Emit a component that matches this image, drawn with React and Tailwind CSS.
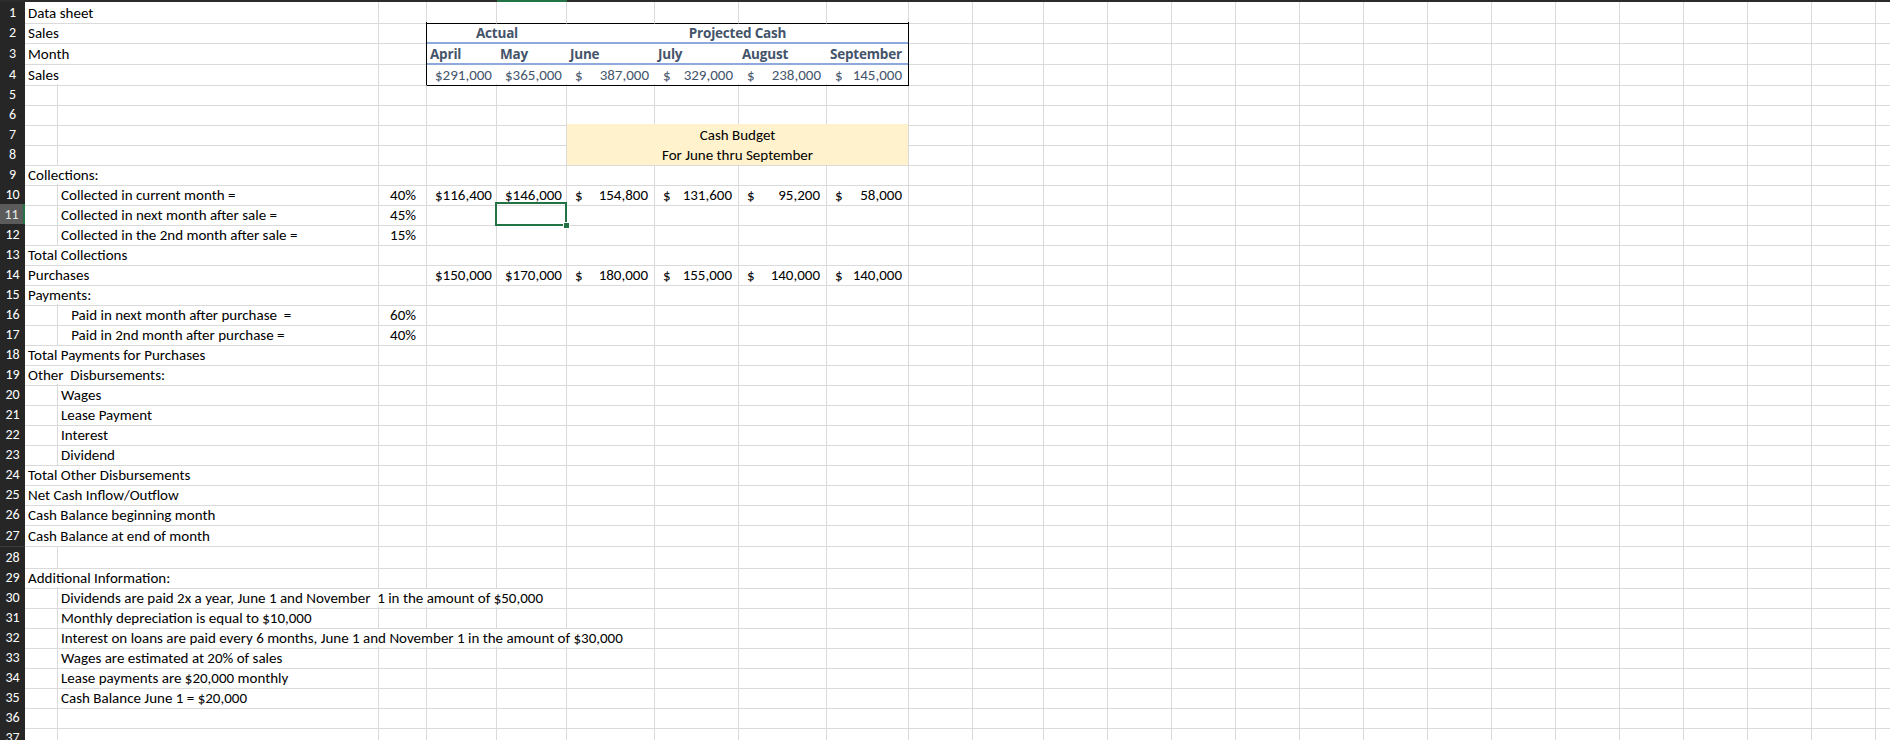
import React from "react";

const G =
  "grid grid-cols-[25px_33px_321px_48px_70px_70px_88px_84px_88px_82px_64px_71px_repeat(14,64px)]";
const TOTAL = 25;
const GRID = "border-r border-b border-[#dadada]";
const SPAN = { 1: "", 2: "col-span-2", 4: "col-span-4", 5: "col-span-5" };
const TXT = "flex items-end whitespace-pre pl-[3px] pb-[1px] leading-[18px]";

function RowHeader({ n, selected }) {
  return (
    <div
      className={
        selected
          ? "flex items-center justify-center bg-[#5b5b5b] text-[#e8e8e8] text-[14px] border-b border-[#3a3a3a] border-r-2 border-r-[#217346]"
          : "flex items-center justify-center bg-[#262626] text-white text-[14px] border-b border-[#3a3a3a]"
      }
    >
      {n}
    </div>
  );
}

function Row({ n, h = "h-[20px]", cells = [], selected }) {
  const map = {};
  cells.forEach((c) => (map[c.c] = c));
  const out = [];
  let col = 0;
  while (col < TOTAL) {
    const cell = map[col];
    if (cell) {
      const span = cell.span || 1;
      out.push(
        <div
          key={col}
          className={`${SPAN[span]} ${cell.cls ?? GRID} ${cell.inner ?? TXT} relative min-w-0`}
        >
          {cell.t}
          {cell.extra}
        </div>
      );
      col += span;
    } else {
      out.push(<div key={col} className={GRID} />);
      col++;
    }
  }
  return (
    <div className={`${G} ${h}`}>
      <RowHeader n={n} selected={selected} />
      {out}
    </div>
  );
}

const A = (t) => ({ c: 0, span: 2, t });
const B = (t, span = 1) => ({ c: 1, span, t });
const PCT = (t) => ({
  c: 2,
  t,
  inner: "flex items-end justify-end pr-[10px] pb-[1px] leading-[18px]",
});
const ACC = (c, v) => ({
  c,
  t: (
    <>
      <span>$</span>
      <span>{v}</span>
    </>
  ),
  inner: "flex items-end justify-between pl-[8px] pr-[6px] pb-[1px] leading-[18px] whitespace-nowrap",
});

const HEAD = "text-[#44546a] font-bold font-['Open_Sans',sans-serif] text-[13.5px] tracking-[-0.2px]";

export default function App() {
  const boxTop = [3, 4, 5, 6, 7, 8].map((c) => ({
    c,
    t: null,
    cls: "border-r border-b border-r-[#dadada] border-b-black",
  }));
  const leftBlack = { c: 2, t: null, cls: "border-r border-b border-r-black border-b-[#dadada]" };
  const blue = "border-b-2 border-b-[#8ea9db]";
  const months = ["April", "May", "June", "July", "August", "September"];
  const sales = ["291,000", "365,000", "387,000", "329,000", "238,000", "145,000"];

  return (
    <div className="w-[1890px] h-[740px] overflow-hidden bg-white text-black text-[15px] font-['Carlito','Lato',sans-serif]">
      {/* top band */}
      <div className={`${G} h-[2px]`}>
        {Array.from({ length: TOTAL + 1 }).map((_, i) => (
          <div key={i} className={i === 5 ? "bg-[#217346]" : "bg-[#2b2b2b]"} />
        ))}
      </div>

      <Row n={1} cells={[A("Data sheet"), ...boxTop]} />
      <Row
        n={2}
        h="h-[21px]"
        cells={[
          A("Sales"),
          leftBlack,
          {
            c: 3,
            span: 2,
            t: "Actual",
            cls: blue,
            inner: `flex items-end justify-center leading-[18px] ${HEAD}`,
          },
          {
            c: 5,
            span: 4,
            t: "Projected Cash",
            cls: `${blue} border-r border-r-black`,
            inner: `flex items-end justify-center leading-[18px] ${HEAD}`,
          },
        ]}
      />
      <Row
        n={3}
        h="h-[21px]"
        cells={[
          A("Month"),
          leftBlack,
          ...months.map((m, i) => ({
            c: 3 + i,
            t: m,
            cls: i === 5 ? `${blue} border-r border-r-black` : blue,
            inner: `flex items-end whitespace-pre pl-[3px] leading-[18px] ${HEAD}`,
          })),
        ]}
      />
      <Row
        n={4}
        cells={[
          A("Sales"),
          leftBlack,
          ...sales.map((v, i) => ({
            c: 3 + i,
            t: (
              <>
                <span>$</span>
                <span>{v}</span>
              </>
            ),
            cls: i === 5 ? "border-b border-b-black border-r border-r-black" : "border-b border-b-black",
            inner: "flex items-end justify-between pl-[8px] pr-[6px] pb-[1px] leading-[18px] whitespace-nowrap text-[#44546a]",
          })),
        ]}
      />
      <Row n={5} />
      <Row n={6} />
      <Row
        n={7}
        cells={[
          {
            c: 5,
            span: 4,
            t: "Cash Budget",
            cls: "bg-[#fff2cc] border-r border-r-[#dadada]",
            inner: "flex items-end justify-center pb-[2px] leading-[18px]",
          },
        ]}
      />
      <Row
        n={8}
        cells={[
          {
            c: 5,
            span: 4,
            t: "For June thru September",
            cls: "bg-[#fff2cc] border-r border-b border-[#dadada]",
            inner: "flex items-end justify-center pb-[1px] leading-[18px]",
          },
        ]}
      />
      <Row n={9} cells={[A("Collections:")]} />
      <Row
        n={10}
        cells={[
          B("Collected in current month ="),
          PCT("40%"),
          ACC(3, "116,400"),
          ACC(4, "146,000"),
          ACC(5, "154,800"),
          ACC(6, "131,600"),
          ACC(7, "95,200"),
          ACC(8, "58,000"),
        ]}
      />
      <Row
        n={11}
        selected
        cells={[
          B("Collected in next month after sale ="),
          PCT("45%"),
          {
            c: 4,
            t: null,
            extra: (
              <>
                <div className="absolute -left-[2px] -top-[2px] -right-[1px] -bottom-[1px] border-2 border-[#217346]" />
                <div className="absolute -right-[4px] -bottom-[4px] w-[7px] h-[7px] bg-[#217346] border border-white" />
              </>
            ),
          },
        ]}
      />
      <Row n={12} cells={[B("Collected in the 2nd month after sale ="), PCT("15%")]} />
      <Row n={13} cells={[A("Total Collections")]} />
      <Row
        n={14}
        cells={[
          A("Purchases"),
          ACC(3, "150,000"),
          ACC(4, "170,000"),
          ACC(5, "180,000"),
          ACC(6, "155,000"),
          ACC(7, "140,000"),
          ACC(8, "140,000"),
        ]}
      />
      <Row n={15} cells={[A("Payments:")]} />
      <Row n={16} cells={[B("   Paid in next month after purchase  ="), PCT("60%")]} />
      <Row n={17} cells={[B("   Paid in 2nd month after purchase ="), PCT("40%")]} />
      <Row n={18} cells={[A("Total Payments for Purchases")]} />
      <Row n={19} cells={[A("Other  Disbursements:")]} />
      <Row n={20} cells={[B("Wages")]} />
      <Row n={21} cells={[B("Lease Payment")]} />
      <Row n={22} cells={[B("Interest")]} />
      <Row n={23} cells={[B("Dividend")]} />
      <Row n={24} cells={[A("Total Other Disbursements")]} />
      <Row n={25} cells={[A("Net Cash Inflow/Outflow")]} />
      <Row n={26} cells={[A("Cash Balance beginning month")]} />
      <Row n={27} h="h-[23px]" cells={[A("Cash Balance at end of month")]} />
      <Row n={28} />
      <Row n={29} cells={[A("Additional Information:")]} />
      <Row
        n={30}
        cells={[B("Dividends are paid 2x a year, June 1 and November  1 in the amount of $50,000", 4)]}
      />
      <Row n={31} cells={[B("Monthly depreciation is equal to $10,000")]} />
      <Row
        n={32}
        cells={[
          B("Interest on loans are paid every 6 months, June 1 and November 1 in the amount of $30,000", 5),
        ]}
      />
      <Row n={33} cells={[B("Wages are estimated at 20% of sales")]} />
      <Row n={34} cells={[B("Lease payments are $20,000 monthly")]} />
      <Row n={35} cells={[B("Cash Balance June 1 = $20,000")]} />
      <Row n={36} />
      <Row n={37} />
    </div>
  );
}
